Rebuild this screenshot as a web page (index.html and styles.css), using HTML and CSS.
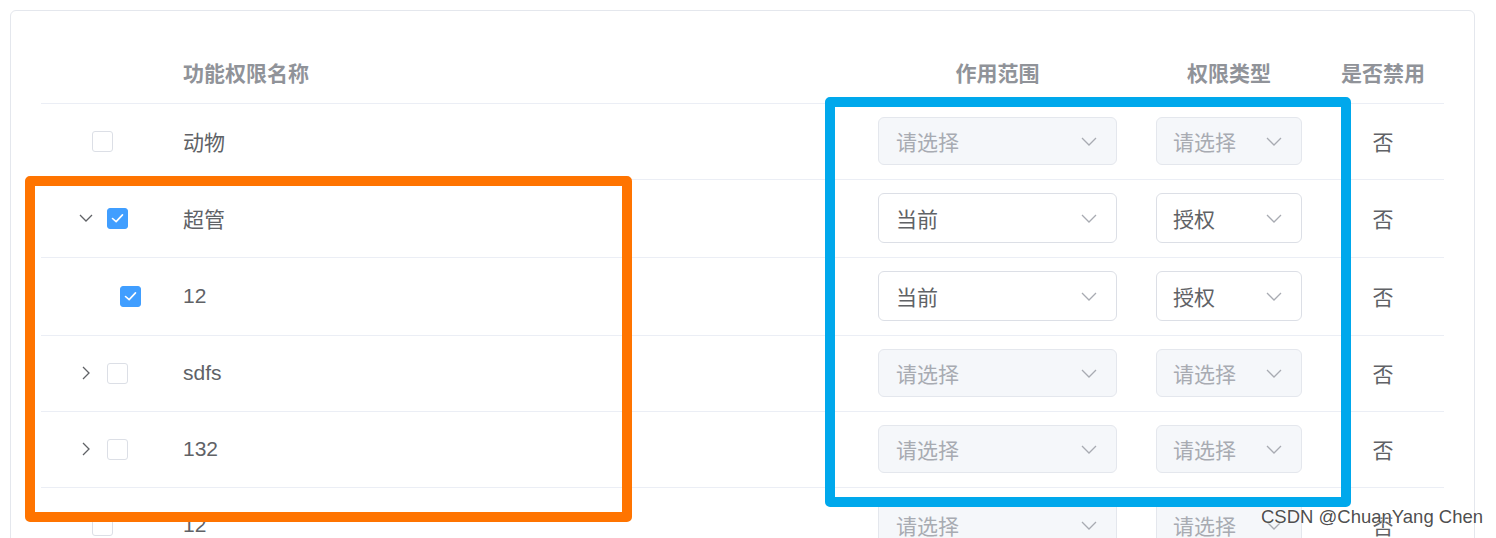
FILE: index.html
```html
<!DOCTYPE html>
<html lang="zh-CN">
<head>
<meta charset="utf-8">
<title>功能权限</title>
<link rel="stylesheet" href="styles.css">
</head>
<body>
<div class="card">
  <table class="perm-table">
    <colgroup>
      <col class="c-sel"><col class="c-name"><col class="c-scope"><col class="c-type"><col class="c-dis">
    </colgroup>
    <thead>
      <tr>
        <th></th>
        <th class="left">功能权限名称</th>
        <th>作用范围</th>
        <th>权限类型</th>
        <th>是否禁用</th>
      </tr>
    </thead>
    <tbody>
      <tr>
        <td><div class="cell lvl-leaf"><span class="cb"></span></div></td>
        <td class="name">动物</td>
        <td><div class="select disabled wide"><span>请选择</span><svg class="chev" viewBox="0 0 16 9"><path d="M1 1 L8 8 L15 1"/></svg></div></td>
        <td><div class="select disabled narrow"><span>请选择</span><svg class="chev" viewBox="0 0 16 9"><path d="M1 1 L8 8 L15 1"/></svg></div></td>
        <td class="center">否</td>
      </tr>
      <tr>
        <td><div class="cell lvl-parent"><span class="arrow"><svg viewBox="0 0 14 8" class="arr-down"><path d="M1 1 L7 7 L13 1"/></svg></span><span class="cb checked"><svg viewBox="0 0 21 21"><path d="M5 10.5 L9 14 L16 6.5"/></svg></span></div></td>
        <td class="name">超管</td>
        <td><div class="select wide"><span>当前</span><svg class="chev" viewBox="0 0 16 9"><path d="M1 1 L8 8 L15 1"/></svg></div></td>
        <td><div class="select narrow"><span>授权</span><svg class="chev" viewBox="0 0 16 9"><path d="M1 1 L8 8 L15 1"/></svg></div></td>
        <td class="center">否</td>
      </tr>
      <tr>
        <td><div class="cell lvl-child"><span class="cb checked"><svg viewBox="0 0 21 21"><path d="M5 10.5 L9 14 L16 6.5"/></svg></span></div></td>
        <td class="name">12</td>
        <td><div class="select wide"><span>当前</span><svg class="chev" viewBox="0 0 16 9"><path d="M1 1 L8 8 L15 1"/></svg></div></td>
        <td><div class="select narrow"><span>授权</span><svg class="chev" viewBox="0 0 16 9"><path d="M1 1 L8 8 L15 1"/></svg></div></td>
        <td class="center">否</td>
      </tr>
      <tr>
        <td><div class="cell lvl-parent"><span class="arrow"><svg viewBox="0 0 8 14" class="arr-right"><path d="M1 1 L7 7 L1 13"/></svg></span><span class="cb"></span></div></td>
        <td class="name">sdfs</td>
        <td><div class="select disabled wide"><span>请选择</span><svg class="chev" viewBox="0 0 16 9"><path d="M1 1 L8 8 L15 1"/></svg></div></td>
        <td><div class="select disabled narrow"><span>请选择</span><svg class="chev" viewBox="0 0 16 9"><path d="M1 1 L8 8 L15 1"/></svg></div></td>
        <td class="center">否</td>
      </tr>
      <tr>
        <td><div class="cell lvl-parent"><span class="arrow"><svg viewBox="0 0 8 14" class="arr-right"><path d="M1 1 L7 7 L1 13"/></svg></span><span class="cb"></span></div></td>
        <td class="name">132</td>
        <td><div class="select disabled wide"><span>请选择</span><svg class="chev" viewBox="0 0 16 9"><path d="M1 1 L8 8 L15 1"/></svg></div></td>
        <td><div class="select disabled narrow"><span>请选择</span><svg class="chev" viewBox="0 0 16 9"><path d="M1 1 L8 8 L15 1"/></svg></div></td>
        <td class="center">否</td>
      </tr>
      <tr>
        <td><div class="cell lvl-leaf"><span class="cb"></span></div></td>
        <td class="name">12</td>
        <td><div class="select disabled wide"><span>请选择</span><svg class="chev" viewBox="0 0 16 9"><path d="M1 1 L8 8 L15 1"/></svg></div></td>
        <td><div class="select disabled narrow"><span>请选择</span><svg class="chev" viewBox="0 0 16 9"><path d="M1 1 L8 8 L15 1"/></svg></div></td>
        <td class="center">否</td>
      </tr>
    </tbody>
  </table>
</div>

<div class="mark mark-orange"></div>
<div class="mark mark-blue"></div>
<div class="watermark">CSDN @ChuanYang Chen</div>
</body>
</html>
```

FILE: styles.css
```css
html, body {
  margin: 0;
  padding: 0;
  height: 100%;
  overflow: hidden;
  background: #ffffff;
}

body {
  position: relative;
  font-family: "Liberation Sans", "Noto Sans CJK SC", sans-serif;
  color: #606266;
  font-size: 21px;
}

.card {
  margin: 10px 0 0 10px;
  width: 1465px;
  box-sizing: border-box;
  border: 1px solid #e4e7ed;
  border-radius: 6px;
  padding: 30px 30px 30px 30px;
}

.perm-table {
  width: 1403px;
  border-collapse: collapse;
  table-layout: fixed;
}

.c-sel { width: 123px; }
.c-name { width: 695px; }
.c-scope { width: 277px; }
.c-type { width: 186px; }
.c-dis { width: 122px; }

.perm-table th {
  height: 62px;
  padding: 0;
  color: #909399;
  font-weight: 600;
  font-size: 21px;
  text-align: center;
  border-bottom: 1px solid #ebeef5;
  vertical-align: middle;
}

.perm-table th.left {
  text-align: left;
  padding-left: 19px;
}

.perm-table td {
  padding: 13px 0 14px 0;
  border-bottom: 1px solid #ebeef5;
  vertical-align: middle;
}

.perm-table td.name {
  padding-left: 19px;
  color: #606266;
}

.perm-table td.center {
  text-align: center;
}

.cell {
  display: flex;
  align-items: center;
}

.lvl-leaf { padding-left: 51px; }
.lvl-parent { padding-left: 38px; gap: 14px; }
.lvl-child { padding-left: 79px; }

.arrow {
  width: 14px;
  height: 14px;
  display: flex;
  align-items: center;
  justify-content: center;
}

.arrow svg path {
  fill: none;
  stroke: #606266;
  stroke-width: 1.3;
}

.arr-down { width: 14px; height: 8px; }
.arr-right { width: 8px; height: 14px; }

.cb {
  width: 21px;
  height: 21px;
  box-sizing: border-box;
  border: 1px solid #dcdfe6;
  border-radius: 3px;
  background: #ffffff;
  display: inline-block;
}

.cb.checked {
  background: #409eff;
  border-color: #409eff;
}

.cb svg {
  display: block;
  width: 19px;
  height: 19px;
}

.cb svg path {
  fill: none;
  stroke: #ffffff;
  stroke-width: 1.8;
  stroke-linecap: round;
  stroke-linejoin: round;
}

.select {
  margin: 0 auto;
  height: 50px;
  box-sizing: border-box;
  border: 1px solid #dcdfe6;
  border-radius: 6px;
  background: #ffffff;
  display: flex;
  align-items: center;
  justify-content: space-between;
  padding: 0 19px 0 17px;
  color: #606266;
}

.select.disabled {
  height: 48px;
  background: #f5f7fa;
  border-color: #e4e7ed;
  color: #a8abb2;
}

.select.wide { width: 239px; }
.select.narrow { width: 146px; padding-left: 16px; }

.chev {
  width: 16px;
  height: 9px;
}

.chev path {
  fill: none;
  stroke: #a8abb2;
  stroke-width: 1.3;
}

.mark {
  position: absolute;
  box-sizing: border-box;
  border-width: 10px;
  border-style: solid;
  border-radius: 5px;
}

.mark-orange {
  left: 25px;
  top: 176px;
  width: 607px;
  height: 346px;
  border-color: #ff7400;
}

.mark-blue {
  left: 825px;
  top: 97px;
  width: 526px;
  height: 410px;
  border-color: #00a8ec;
}

.watermark {
  position: absolute;
  left: 1261px;
  top: 506px;
  font-family: "Liberation Sans", sans-serif;
  font-size: 18.5px;
  color: rgba(55, 55, 55, 0.9);
  white-space: nowrap;
  text-shadow: 0 0 2px #ffffff, 0 0 1px #ffffff;
}
```
